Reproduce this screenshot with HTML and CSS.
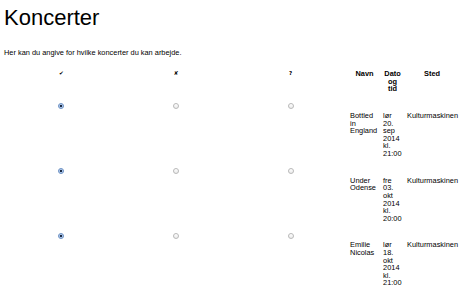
FILE: index.html
```html
<!DOCTYPE html>
<html lang="da">
<head>
<meta charset="utf-8">
<title>Koncerter</title>
<link rel="stylesheet" href="styles.css">
</head>
<body>
<div class="page">
  <h1 class="title">Koncerter</h1>
  <p class="intro">Her kan du angive for hvilke koncerter du kan arbejde.</p>
  <table class="concerts">
    <colgroup>
      <col class="c-choice"><col class="c-choice"><col class="c-choice">
      <col class="c-name"><col class="c-date"><col class="c-place">
    </colgroup>
    <thead>
      <tr>
        <th class="h-choice">&#10004;</th>
        <th class="h-choice">&#10008;</th>
        <th class="h-choice">?</th>
        <th class="h-text">Navn</th>
        <th class="h-text">Dato og tid</th>
        <th class="h-text">Sted</th>
      </tr>
    </thead>
    <tbody>
      <tr>
        <td class="choice"><input class="radio" type="radio" name="k1" checked></td>
        <td class="choice"><input class="radio" type="radio" name="k1"></td>
        <td class="choice"><input class="radio" type="radio" name="k1"></td>
        <td class="info">Bottled in England</td>
        <td class="info">lør 20. sep 2014 kl. 21:00</td>
        <td class="info place">Kulturmaskinen</td>
      </tr>
      <tr>
        <td class="choice"><input class="radio" type="radio" name="k2" checked></td>
        <td class="choice"><input class="radio" type="radio" name="k2"></td>
        <td class="choice"><input class="radio" type="radio" name="k2"></td>
        <td class="info">Under Odense</td>
        <td class="info">fre 03. okt 2014 kl. 20:00</td>
        <td class="info place">Kulturmaskinen</td>
      </tr>
      <tr>
        <td class="choice"><input class="radio" type="radio" name="k3" checked></td>
        <td class="choice"><input class="radio" type="radio" name="k3"></td>
        <td class="choice"><input class="radio" type="radio" name="k3"></td>
        <td class="info">Emilie Nicolas</td>
        <td class="info">lør 18. okt 2014 kl. 21:00</td>
        <td class="info place">Kulturmaskinen</td>
      </tr>
    </tbody>
  </table>
</div>
</body>
</html>
```

FILE: styles.css
```css
html, body {
  margin: 0;
  padding: 0;
  background: #ffffff;
}

body {
  font-family: "Liberation Sans", Arial, sans-serif;
  color: #000000;
}

.page {
  padding: 5px 4px 0 4px;
}

.title {
  margin: 0;
  font-size: 22px;
  line-height: 25px;
  font-weight: normal;
}

.intro {
  margin: 19px 0 13px 0;
  font-size: 7.4px;
  line-height: 8px;
}

.concerts {
  border-collapse: collapse;
  border-spacing: 0;
  table-layout: fixed;
  width: 456px;
  font-size: 7.4px;
  line-height: 7.6px;
}

.c-choice { width: 114.7px; }
.c-name { width: 33px; }
.c-date { width: 23px; }
.c-place { width: 56px; }

.concerts th,
.concerts td {
  padding: 0 2px;
  vertical-align: top;
}

.concerts .h-choice {
  text-align: center;
  font-family: "DejaVu Sans", "Liberation Sans", sans-serif;
  font-size: 5.5px;
  font-weight: bold;
}

.concerts .h-text {
  text-align: center;
  font-weight: bold;
}

.concerts td.choice {
  text-align: center;
  padding-top: 10.7px;
}

.concerts td.info {
  text-align: left;
  padding-top: 19.2px;
}

.concerts td.place {
  padding-left: 3px;
}

.radio {
  -webkit-appearance: none;
  appearance: none;
  display: inline-block;
  width: 6px;
  height: 6px;
  margin: 0;
  box-sizing: border-box;
  border-radius: 50%;
  border: 1px solid #b9b9b9;
  background: linear-gradient(#ffffff, #ebebeb);
  vertical-align: top;
}

.radio:checked {
  border-color: #6f93c4;
  background: radial-gradient(circle, #1c2b44 0, #1c2b44 0.9px, #a9c3e8 1.3px, #c9dbf3 100%);
}
```
